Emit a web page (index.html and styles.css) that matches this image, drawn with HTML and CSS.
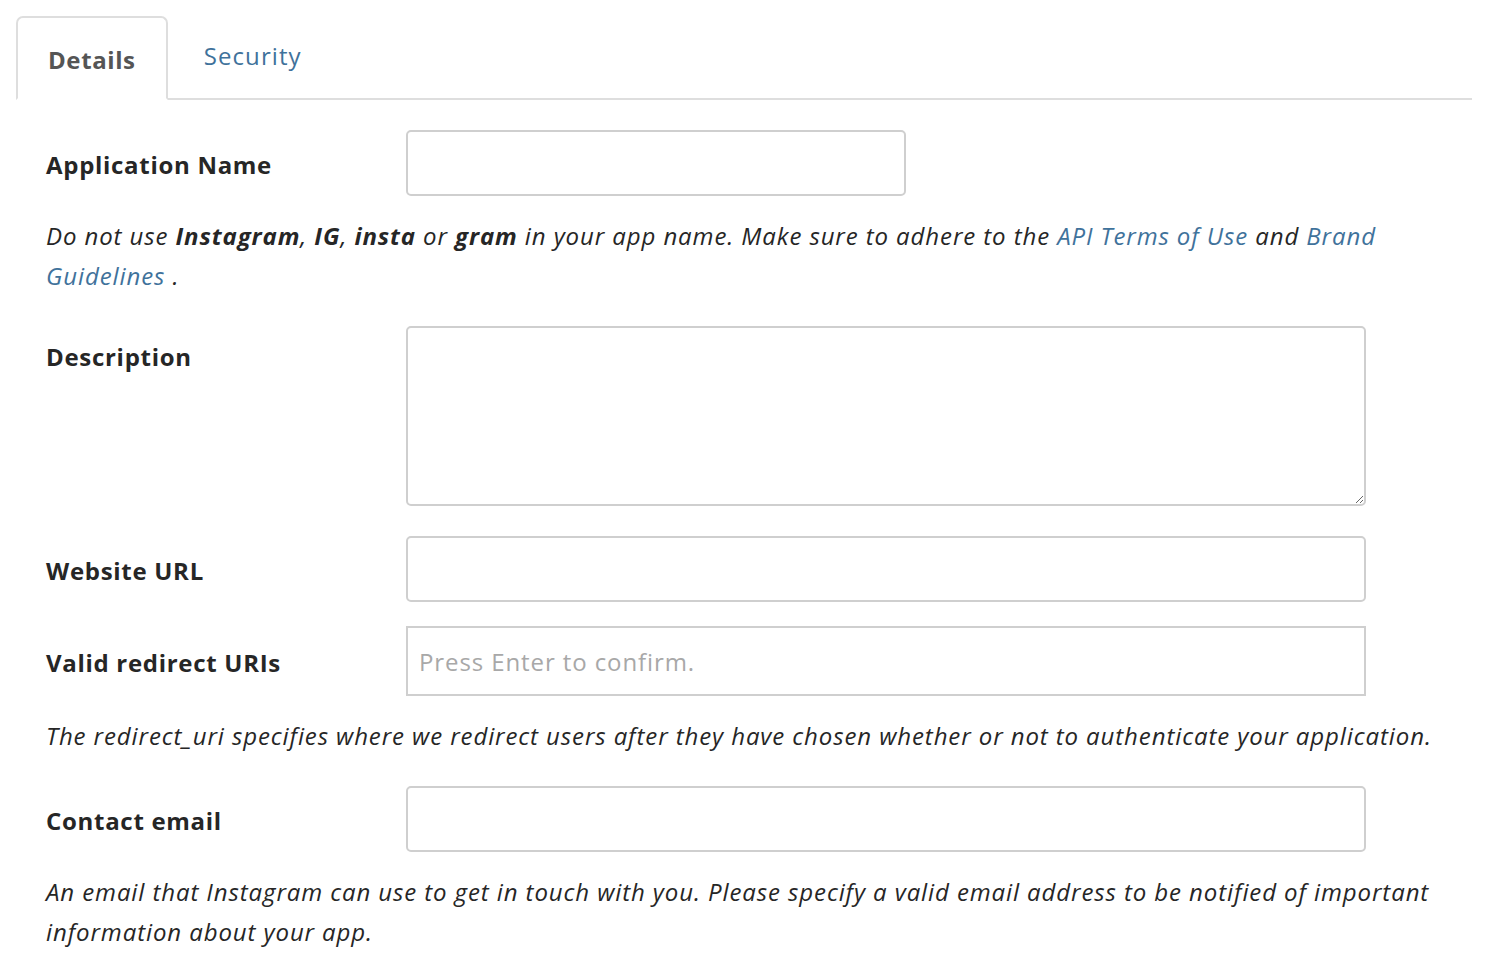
FILE: index.html
```html
<!DOCTYPE html>
<html lang="en">
<head>
<meta charset="utf-8">
<title>Application Details</title>
<link rel="stylesheet" href="styles.css">
</head>
<body>
<div class="page">
  <ul class="tabs">
    <li class="tab active">Details</li>
    <li class="tab"><a href="#">Security</a></li>
  </ul>
  <form class="form">
    <div class="row">
      <label class="label">Application Name</label>
      <input class="input short" type="text">
    </div>
    <p class="help">Do not use <b>Instagram</b>, <b>IG</b>, <b>insta</b> or <b>gram</b> in your app name. Make sure to adhere to the <a href="#">API Terms of Use</a> and <a href="#">Brand Guidelines</a> .</p>
    <div class="row top">
      <label class="label">Description</label>
      <textarea class="input area"></textarea>
    </div>
    <div class="row tight">
      <label class="label">Website URL</label>
      <input class="input" type="text">
    </div>
    <div class="row nogap">
      <label class="label">Valid redirect URIs</label>
      <input class="input tags" type="text" placeholder="Press Enter to confirm.">
    </div>
    <p class="help">The redirect_uri specifies where we redirect users after they have chosen whether or not to authenticate your application.</p>
    <div class="row nogap">
      <label class="label">Contact email</label>
      <input class="input" type="text">
    </div>
    <p class="help">An email that Instagram can use to get in touch with you. Please specify a valid email address to be notified of important information about your app.</p>
  </form>
</div>
</body>
</html>
```

FILE: styles.css
```css
html, body {
  margin: 0;
  padding: 0;
  background: #fff;
}
body {
  font-family: "Open Sans", "Lato", sans-serif;
  color: #262626;
  letter-spacing: 0.9px;
}
.page {
  margin: 16px 24px 0 16px;
}
.tabs {
  list-style: none;
  margin: 0;
  padding: 0;
  display: flex;
  border-bottom: 2px solid #dedede;
  height: 82px;
}
.tab {
  height: 82px;
  box-sizing: border-box;
  padding: 0 30px 0 30px;
  display: flex;
  align-items: center;
  font-size: 24px;
  margin-right: 6px;
}
.tab a {
  color: #3f729b;
  text-decoration: none;
  padding-bottom: 4px;
  letter-spacing: 1.1px;
}
.tab.active {
  height: 84px;
  border: 2px solid #dedede;
  border-bottom: 2px solid #fff;
  border-radius: 7px 7px 0 0;
  background: #fff;
  font-weight: 700;
  color: #555;
  margin-bottom: -2px;
  padding-top: 2px;
  letter-spacing: 0.6px;
}
.form {
  padding: 30px 30px 0 30px;
}
.row {
  display: flex;
  align-items: center;
  margin-bottom: 20px;
}
.row.top {
  align-items: flex-start;
  margin-bottom: 30px;
}
.row.top .label {
  padding-top: 11px;
}
.row.tight {
  margin-bottom: 24px;
}
.row.nogap {
  margin-bottom: 20px;
}
.label {
  width: 360px;
  flex: none;
  font-size: 24px;
  font-weight: 700;
  line-height: 40px;
  color: #262626;
  padding-top: 4px;
  letter-spacing: 0.7px;
}
.input {
  box-sizing: border-box;
  width: 960px;
  height: 66px;
  border: 2px solid #cfcfcf;
  border-radius: 5px;
  font-family: inherit;
  font-size: 24px;
  letter-spacing: 0.9px;
  padding: 0 10px;
  color: #262626;
  background: #fff;
  outline: none;
  margin: 0;
}
.input.short {
  width: 500px;
}
.input.area {
  height: 180px;
  resize: vertical;
}
.input.tags {
  height: 70px;
  border-radius: 0;
  padding-left: 11px;
}
.input.tags::placeholder {
  color: #a8a8a8;
}
.help {
  margin: 0 0 30px 0;
  font-size: 24px;
  line-height: 40px;
  font-style: italic;
  color: #262626;
}
.help b {
  font-weight: 700;
}
.help a {
  color: #3f729b;
  text-decoration: none;
}
```
